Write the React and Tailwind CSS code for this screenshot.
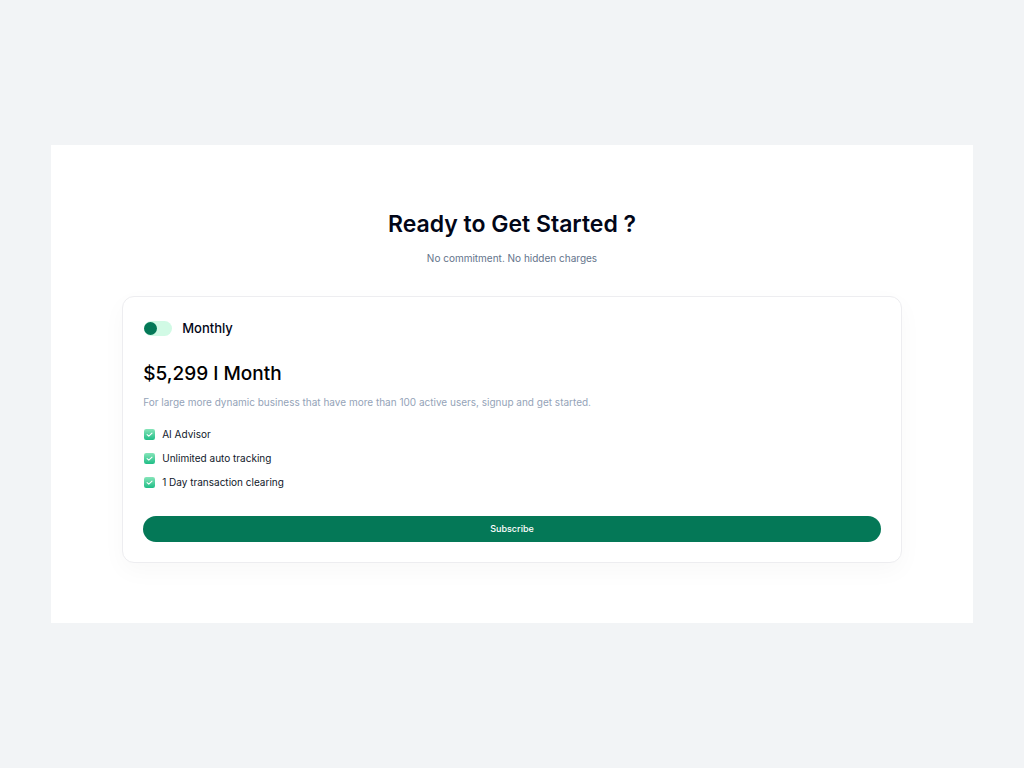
import { useState } from "react";

const features = ["AI Advisor", "Unlimited auto tracking", "1 Day transaction clearing"];

function CheckIcon() {
  return (
    <svg viewBox="0 0 11 11" className="size-[11px] shrink-0" aria-hidden="true">
      <defs>
        <linearGradient id="tick-fill" x1="0" y1="0" x2="0" y2="1">
          <stop offset="0" stopColor="#86e5b9" />
          <stop offset="1" stopColor="#1fbd86" />
        </linearGradient>
      </defs>
      <rect width="11" height="11" rx="2.2" fill="url(#tick-fill)" />
      <path
        d="M3.1 5.7 4.8 7.2 8 4.1"
        fill="none"
        stroke="#fff"
        strokeWidth="1.1"
        strokeLinecap="round"
        strokeLinejoin="round"
      />
    </svg>
  );
}

function PlanToggle() {
  const [yearly, setYearly] = useState(false);
  return (
    <label className="flex w-fit cursor-pointer items-center gap-[10px]">
      <input
        type="checkbox"
        role="switch"
        checked={yearly}
        onChange={(e) => setYearly(e.target.checked)}
        className="flex h-[15px] w-7 cursor-pointer appearance-none items-center rounded-full bg-[#d1fae5] before:size-[13px] before:rounded-full before:bg-[#047857] checked:justify-end"
      />
      <span className="text-[13px] leading-5 font-medium text-[#020617]">Monthly</span>
    </label>
  );
}

export default function App() {
  return (
    <main className="flex min-h-screen items-center justify-center bg-[#f2f4f6] font-['Inter',sans-serif]">
      <section className="w-[90%] bg-white px-[71px] pt-16 pb-[60px]">
        <h1 className="text-center text-[23px] leading-[30px] font-semibold text-[#020617]">
          Ready to Get Started ?
        </h1>
        <p className="mt-[11px] text-center text-[10px] leading-4 text-[#64748b]">
          No commitment. No hidden charges
        </p>

        <div className="mt-[30px] rounded-xl border border-[#ededf0] bg-white p-5 shadow-[0_8px_24px_rgba(0,0,0,0.03)]">
          <div className="pt-px pl-px">
            <PlanToggle />
          </div>
          <h2 className="mt-[22px] text-[19px] leading-7 font-medium text-black">$5,299 I Month</h2>
          <p className="mt-[6px] text-[10px] leading-4 text-[#94a3b8]">
            For large more dynamic business that have more than 100 active users, signup and get
            started.
          </p>
          <ul className="mt-4 flex flex-col gap-2 pl-px">
            {features.map((feature) => (
              <li key={feature} className="flex items-center gap-[7px] text-[10px] leading-4 text-[#0f172a]">
                <CheckIcon />
                {feature}
              </li>
            ))}
          </ul>
          <button
            type="button"
            className="mt-[26px] h-[26px] w-full cursor-pointer rounded-full bg-[#047857] text-[9px] font-medium text-white"
          >
            Subscribe
          </button>
        </div>
      </section>
    </main>
  );
}
